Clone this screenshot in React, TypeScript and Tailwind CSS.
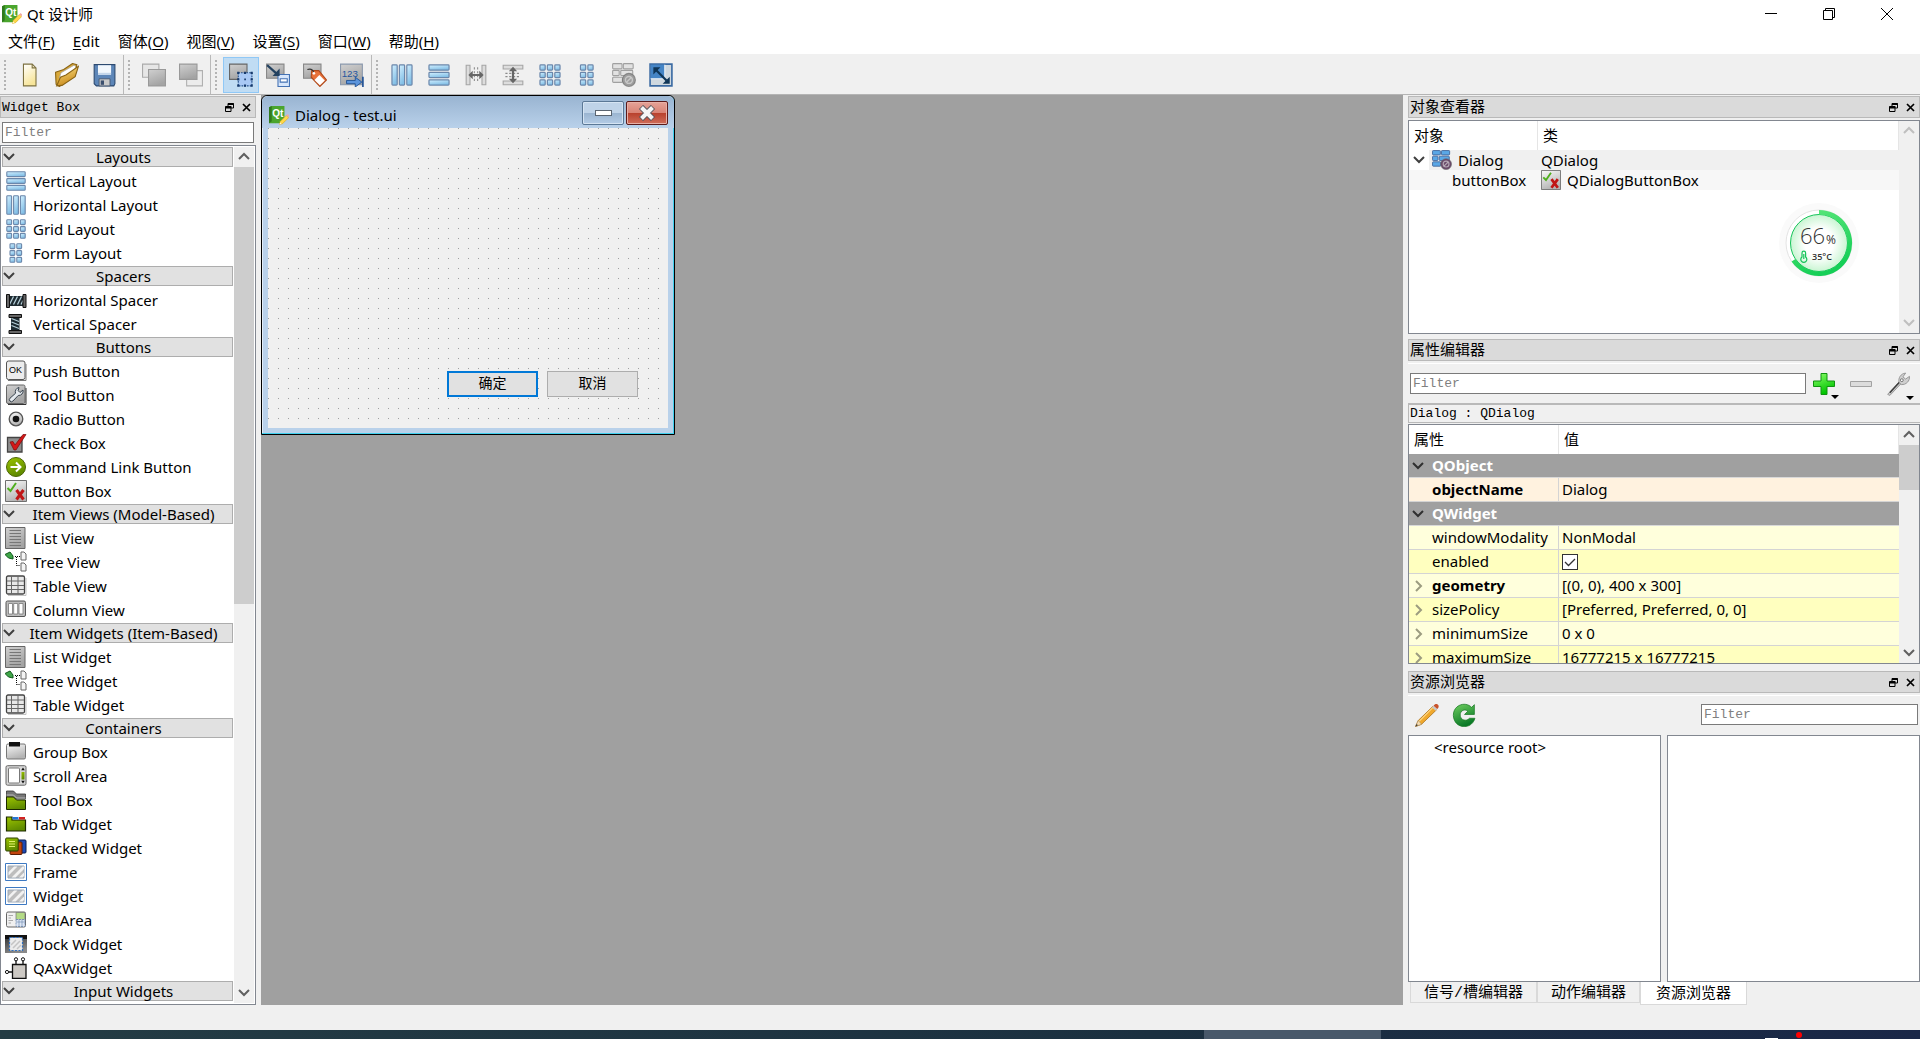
import type { ReactNode } from "react";

type IconProps = { size?: number };

function Svg({ size = 22, children }: { size?: number; children: ReactNode }) {
  return (
    <svg width={size} height={size} viewBox="0 0 22 22" fill="none" aria-hidden="true" className="shrink-0">
      {children}
    </svg>
  );
}

/* Shared gradients, referenced by id from every icon. */
function Gradients() {
  const pairs = [
    ["gBlue", "#d3f0ff", "#83bfe6"],
    ["gGray", "#fafafa", "#b4b4b4"],
    ["gMid", "#d0d0d0", "#a4a4a4"],
    ["gGreen", "#9cc400", "#5f8a00"],
    ["gDark", "#2a2a2a", "#8a8a8a"],
    ["gPaper", "#ffffff", "#f7e59a"],
    ["gFolder", "#ffe88a", "#c98a1c"],
    ["gPlus", "#8dff6a", "#00c400"],
    ["gReload", "#6fcf5f", "#0b7a28"],
    ["gRing", "#5fe87c", "#16cf57"],
  ];
  return (
    <svg width="0" height="0" className="absolute" aria-hidden="true">
      <defs>
        {pairs.map(([id, from, to]) => (
          <linearGradient key={id} id={id} x1="0" y1="0" x2="0.4" y2="1">
            <stop offset="0" stopColor={from} />
            <stop offset="1" stopColor={to} />
          </linearGradient>
        ))}
        <radialGradient id="gBall">
          <stop offset="0.5" stopColor="#ffffff" />
          <stop offset="1" stopColor="#c9f5d2" />
        </radialGradient>
      </defs>
    </svg>
  );
}

const QtLogo = ({ size = 20 }: IconProps) => (
  <Svg size={size}>
    <path d="M0 2.500 3 1h14v17l-2 2H0z" fill="#4aa52e" />
    <path d="M0 2.500 3 1v17l-3 2z" fill="#2f7a1c" />
    <text x="3.500" y="13.500" fontSize="11" fontWeight="bold" fill="#fff" fontFamily="Liberation Sans, sans-serif">
      Qt
    </text>
    <path d="m11.500 21.500 1-3.500 6.500-6.500 2.500 2.500-6.500 6.500z" fill="#ffd84a" stroke="#d9a520" strokeWidth=".6" />
    <path d="m19 11.500 1.500-1.500 1.500 1.500v2z" fill="#f2a7a0" />
    <path d="m11.500 21.500.8-2.400 1.600 1.600z" fill="#fff4d6" />
  </Svg>
);

/* ---- layout icons ---- */
function Cells({ size, rects }: { size?: number; rects: number[][] }) {
  return (
    <Svg size={size}>
      {rects.map(([x, y, w, h], i) => (
        <rect key={i} x={x} y={y} width={w} height={h} rx="0.8" fill="url(#gBlue)" stroke="#6b87ab" strokeWidth="1.100" />
      ))}
    </Svg>
  );
}

const three = [1.8, 8.6, 15.4];
const VLayout = ({ size }: IconProps) => <Cells size={size} rects={three.map((y) => [1.8, y, 18.4, 4.8])} />;
const HLayout = ({ size }: IconProps) => <Cells size={size} rects={three.map((x) => [x, 1.8, 4.8, 18.4])} />;
const GridLayout = ({ size }: IconProps) => (
  <Cells size={size} rects={three.flatMap((y) => three.map((x) => [x, y, 4.8, 4.8]))} />
);
const FormLayout = ({ size }: IconProps) => (
  <Cells size={size} rects={three.flatMap((y) => [5, 11.8].map((x) => [x, y, 4.8, 4.8]))} />
);

const HSplit = ({ size }: IconProps) => (
  <Svg size={size}>
    <path d="M2 2h3.500v18H2zM16.500 2H20v18h-3.500z" fill="#ddd" stroke="#a5a5a5" />
    <path d="M9.500 4v14M12.500 4v14" stroke="#8c8c8c" strokeDasharray="2 1.500" />
    <path d="m4 11 4-3.800V10h6V7.200l4 3.800-4 3.800V12H8v2.800z" fill="#666" />
  </Svg>
);
const VSplit = ({ size }: IconProps) => (
  <Svg size={size}>
    <path d="M2 2h18v3.500H2zM2 16.500h18V20H2z" fill="#ddd" stroke="#a5a5a5" />
    <path d="M4 9.500h14M4 12.500h14" stroke="#8c8c8c" strokeDasharray="2 1.500" />
    <path d="m11 3.500 3.800 4H12v7h2.800l-3.800 4-3.800-4H10v-7H7.200z" fill="#666" />
  </Svg>
);

function Forbidden({ color }: { color: string }) {
  return (
    <>
      <circle cx="15.500" cy="15.500" r="6" fill={color} stroke="#666" strokeOpacity=".6" />
      <circle cx="15.500" cy="15.500" r="3.200" stroke="#e4e4e4" strokeOpacity=".6" strokeWidth="1.300" />
      <path d="m13.500 17.500 4-4" stroke="#e4e4e4" strokeOpacity=".6" strokeWidth="1.300" />
    </>
  );
}
const brokenRects = [
  [0.6, 0.6, 8.6, 4.8],
  [10.4, 0.6, 9, 4.8],
  [0.6, 6.8, 6, 4.8],
  [8, 6.8, 11, 4.8],
  [0.6, 13, 9, 4.8],
];
const BreakLayout = ({ size }: IconProps) => (
  <Svg size={size}>
    {brokenRects.map(([x, y, w, h], i) => (
      <rect key={i} x={x} y={y} width={w} height={h} rx=".8" fill="#e2e2e2" stroke="#a0a0a0" />
    ))}
    <Forbidden color="#9d9d9d" />
  </Svg>
);
const DialogIcon = ({ size }: IconProps) => (
  <Svg size={size}>
    {brokenRects.map(([x, y, w, h], i) => (
      <rect key={i} x={x} y={y} width={w} height={h} rx=".8" fill="#5aa7e6" stroke="#44689c" />
    ))}
    <Forbidden color="#6a4a6a" />
  </Svg>
);
const AdjustSize = ({ size }: IconProps) => (
  <Svg size={size}>
    <path d="M1 1h20v20H1z" fill="#cfd8df" stroke="#3c6ba3" strokeWidth="1.500" />
    <path d="M1.500 1.500h13v13h-13z" fill="#4585c6" />
    <path d="M14.500 1.500v13h-13" stroke="#eef4fa" />
    <path d="m6 6 10 10" stroke="#0f3557" strokeWidth="2" />
    <path d="M4 4h6.500L4 10.500zM19 19h-6.500l6.500-6.500z" fill="#0f3557" />
  </Svg>
);

/* ---- file and mode icons ---- */
const NewFile = ({ size }: IconProps) => (
  <Svg size={size}>
    <path d="M5 1h8L16.500 4.500V21H5z" fill="url(#gPaper)" stroke="#7d7140" />
    <path d="M13 1v3.500h3.500" stroke="#7d7140" />
  </Svg>
);
const OpenFile = ({ size }: IconProps) => (
  <Svg size={size}>
    <path d="M.5 8.500 8 6l8-5.500 4 1L18 12 4 21.500l-3-2z" fill="#d9a93a" stroke="#8a6415" />
    <path d="m4 14 1.500-5 12-7 1.500 1.500-2 6z" fill="#fff" stroke="#aaa" strokeWidth=".7" />
    <path d="M1.500 21 5 13l5-2L21.500 3l-3 9.500L6.500 20.500z" fill="url(#gFolder)" stroke="#8a6415" />
  </Svg>
);
const SaveFile = ({ size }: IconProps) => (
  <Svg size={size}>
    <path d="M2 1.500h19v17.500l-1 2H4l-2-2z" fill="#5d86b8" stroke="#2d4a70" />
    <path d="M5.500 2h12v8h-12z" fill="#f2f7fc" />
    <path d="M5.500 10h12" stroke="#c4d6ea" strokeWidth="2" />
    <path d="M6.500 14.500h10V21h-10z" fill="#c9c9c9" stroke="#44566e" strokeWidth=".8" />
    <path d="M8 16h3v4H8z" fill="#3b4f6e" />
  </Svg>
);
const LowerIcon = ({ size }: IconProps) => (
  <Svg size={size}>
    <path d="M.5 1h15v12h-15z" fill="#e6e6e6" stroke="#aaa" />
    <path d="M6 6h15.500v15H6z" fill="url(#gMid)" stroke="#999" />
  </Svg>
);
const RaiseIcon = ({ size }: IconProps) => (
  <Svg size={size}>
    <path d="M7 7h14.500v14H7z" fill="#ececec" stroke="#b0b0b0" />
    <path d="M.5 1h16v14H.5z" fill="url(#gMid)" stroke="#999" />
  </Svg>
);
const EditWidgets = ({ size }: IconProps) => (
  <Svg size={size}>
    <path d="M.5 1h16v14H.5z" fill="url(#gMid)" stroke="#666" />
    <path d="M8.500 9h12.500v12H8.500z" fill="#a9c9f5" stroke="#24508c" strokeDasharray="1.500 1" />
    <path d="M7.500 8h2v2h-2zM13.700 8h2v2h-2zM19.800 8h2v2h-2zM7.500 14h2v2h-2zM19.800 14h2v2h-2zM7.500 19.800h2v2h-2zM13.700 19.800h2v2h-2zM19.800 19.800h2v2h-2zM14 14.300h1.500v1.500H14z" fill="#173a6b" />
  </Svg>
);
const EditSignals = ({ size }: IconProps) => (
  <Svg size={size}>
    <path d="M.5 1h16v13H.5z" fill="url(#gMid)" stroke="#888" />
    <path d="M11 10.500h10.500v11H11z" fill="#d7e6fb" stroke="#4472b4" />
    <path d="M13 14.500h6.500v3H13z" fill="#fff" stroke="#4472b4" />
    <path d="m1 2 9 8" stroke="#23415f" strokeWidth="2" />
    <path d="M12.500 12H6l6.500-7z" fill="#23415f" />
  </Svg>
);
const EditBuddies = ({ size }: IconProps) => (
  <Svg size={size}>
    <path d="M.5 1h16v13H.5z" fill="url(#gMid)" stroke="#888" />
    <path d="M8 7h6.500l7 8.500-6 6L7.500 13z" fill="#e8723a" stroke="#b0491a" />
    <path d="m15 11 5 5-4.500 4.500-5-5z" fill="#fff" />
    <path d="M4 6c3-1 5 0 6 3" stroke="#333" />
    <circle cx="10" cy="9.500" r="1.200" fill="#fff" />
  </Svg>
);
const EditTabs = ({ size }: IconProps) => (
  <Svg size={size}>
    <path d="M.5 1h20v19H.5z" fill="url(#gMid)" stroke="#8b99ad" />
    <text x="1.500" y="13" fontSize="9" fill="#2657a0" fontFamily="Liberation Sans, sans-serif">
      123
    </text>
    <path d="M6 16h8v-3l6 4.500-6 4.500v-3H6z" fill="#5b94dc" stroke="#1d4f94" strokeWidth=".8" />
    <path d="M21 12.500V22" stroke="#1d4f94" strokeWidth="1.500" />
  </Svg>
);

/* ---- widget box icons ---- */
const HSpacer = () => (
  <Svg>
    <path d="M4 7h14v10H4z" fill="#1d2a30" />
    <path d="m4.500 15.500 4-8M8.500 15.500l4-8M12.500 15.500l4-8M16 15.500l2-4" stroke="#b4ced8" strokeWidth="1.300" />
    <path d="M1.500 5.500h3v13h-3zM18 5.500h3v13h-3z" fill="#666" stroke="#111" />
  </Svg>
);
const VSpacer = () => (
  <Svg>
    <path d="M6 4.500h8.500v13H6z" fill="#1d2a30" />
    <path d="m6.500 5.500 7.500 3M6.500 9l7.500 3M6.500 12.500l7.500 3" stroke="#b4ced8" strokeWidth="1.300" />
    <path d="M4 1.500h12.500v3H4zM4 17.500h12.500v3H4z" fill="#666" stroke="#111" />
  </Svg>
);
const PushBtn = () => (
  <Svg>
    <rect x="1.500" y="1" width="18.500" height="18.500" rx="2" fill="#ececec" stroke="#555" />
    <path d="M3 20.500h18V4" stroke="#777" />
    <text x="4" y="13" fontSize="9" fill="#000" fontFamily="Liberation Sans, sans-serif">
      OK
    </text>
  </Svg>
);
const ToolBtn = () => (
  <Svg>
    <rect x="1.500" y="1" width="18.500" height="18.500" rx="1.500" fill="url(#gMid)" stroke="#666" />
    <path d="M3 20.500h18V4" stroke="#333" />
    <path d="M14 3.500a4.500 4.500 0 0 0-3.500 5.800L5 14.200a2 2 0 0 0 2.900 2.900l5.300-5.600A4.500 4.500 0 0 0 18 6l-3 2.500-1.800-1.800z" fill="#e4e9ee" stroke="#39444f" />
  </Svg>
);
const RadioBtn = () => (
  <Svg>
    <circle cx="11" cy="11" r="6.800" fill="url(#gGray)" stroke="#555" strokeWidth="1.300" />
    <circle cx="11" cy="11" r="3.300" fill="#111" />
  </Svg>
);
const CheckBtn = () => (
  <Svg>
    <path d="M2.500 5.500H17V20H2.500z" fill="#8d8d8d" stroke="#444" strokeWidth="1.300" />
    <path d="m5 10 3-.5 2 3.500L18 2.500h3L11 18H9z" fill="#d31818" stroke="#7a0808" strokeWidth=".7" />
  </Svg>
);
const CommandBtn = () => (
  <Svg>
    <circle cx="11" cy="11" r="9.500" fill="url(#gGreen)" stroke="#4c6606" />
    <path d="M5.500 11h9.500M11 6.500l4.500 4.500-4.500 4.500" stroke="#fff" strokeWidth="2" />
  </Svg>
);
const ButtonBox = ({ size }: IconProps) => (
  <Svg size={size}>
    <path d="M.5.5h21v21H.5z" fill="url(#gGray)" stroke="#6f6f6f" />
    <path d="m2.500 8 3 3L11 3" stroke="#4fae1e" strokeWidth="2" />
    <path d="m11.500 10 7 9.500M18.500 10l-7 9.500" stroke="#c01616" strokeWidth="3" />
  </Svg>
);
const ListIcon = () => (
  <Svg>
    <path d="M.5.5H20v21H.5z" fill="url(#gMid)" stroke="#666" />
    <path d="M4.500 3.500H16M4.500 6.500H16M4.500 9.500H16M4.500 12.500H16M4.500 15.500H16M4.500 18.500H16" stroke="#777" />
  </Svg>
);
const TreeIcon = () => (
  <Svg>
    <path d="m0 3.500 5-2.500 3 4v3L3.500 7z" fill="#3fa648" stroke="#115a1d" />
    <path d="M10 5.500h5M11.500 6v8.500M11.500 14.500H15" stroke="#000" strokeDasharray="1 1" />
    <path d="M16 1h3l2 2v6h-5zM16 12h3l2 2v6h-5z" fill="#f4f4f4" stroke="#666" />
  </Svg>
);
const TableIcon = () => (
  <Svg>
    <rect x="1.500" y="1" width="18" height="18" rx="1.500" fill="#e8e8e8" stroke="#444" strokeWidth="1.300" />
    <path d="M2 6h17M2 10.500h17M2 14.500h17M6.500 1v18M13 1v18" stroke="#666" />
    <path d="M3 20.500h18V3" stroke="#aaa" strokeOpacity=".7" />
  </Svg>
);
const ColumnIcon = () => (
  <Svg>
    <rect x="1" y="2" width="19.500" height="15.500" rx="1.500" fill="#bcbcbc" stroke="#555" />
    <path d="M3.500 4.500h4v10.500h-4zM8.700 4.500h4v10.500h-4zM14 4.500h4v10.500h-4z" fill="#fff" stroke="#777" strokeWidth=".8" />
  </Svg>
);
const GroupIcon = () => (
  <Svg>
    <rect x="1.500" y="3" width="19" height="15" rx="1.500" fill="url(#gGray)" stroke="#777" />
    <path d="M4 1h11v4.500H4z" fill="#111" />
  </Svg>
);
const ScrollIcon = () => (
  <Svg>
    <rect x="1" y=".7" width="20" height="19.500" rx="1.500" fill="#d6d6d6" stroke="#666" />
    <rect x="3.500" y="3" width="11" height="15" rx="1" fill="#fff" stroke="#777" />
    <path d="M16.500 7h3v7.500h-3z" fill="url(#gGreen)" />
    <path d="m18 2.500 1.800 2.800h-3.600zM18 18.500l1.800-2.800h-3.600z" fill="#111" />
  </Svg>
);
const ToolBoxIcon = () => (
  <Svg>
    <path d="M1.500 2h7l3 3h9v5h-19z" fill="#777" stroke="#333" strokeWidth=".8" />
    <path d="M1.500 6h7l3 3h9" stroke="#bbb" />
    <path d="M1.500 8h7l3 3h9v9.500h-19z" fill="url(#gGreen)" stroke="#1c2a00" />
  </Svg>
);
const TabIcon = () => (
  <Svg>
    <path d="M1.500 4h5.500v3h13.500v11h-19z" fill="url(#gGreen)" stroke="#1c2a00" strokeWidth="1.200" />
    <path d="M7.500 4h6v2.500h-6z" fill="#2475d8" />
    <path d="M14 4h6v2.500h-6z" fill="#d12222" />
  </Svg>
);
const StackIcon = () => (
  <Svg>
    <rect x="8" y="3" width="13" height="13" rx="1" fill="#1c49b5" stroke="#0a1c50" />
    <rect x="5" y="5" width="12" height="12.500" rx="1" fill="#c1440e" stroke="#5c1d04" />
    <rect x=".7" y="1" width="12.500" height="13" rx="1" fill="url(#gGreen)" stroke="#2d4000" />
    <path d="M4 4.500h6M4 7h6M4 9.500h6" stroke="#dff06a" />
  </Svg>
);
const FrameIcon = () => (
  <Svg>
    <path d="M.5 2.500h21v17H.5z" fill="#fff" stroke="#3d79c2" />
    <path d="M3 5h16v12H3z" fill="#bdbdbd" stroke="#9aa8b8" />
    <path d="m3.500 11 5.500-5.500h3.500L3.500 14.500zM6.500 16.500l11-11H19v2.500l-8.500 8.500zM14 16.500l5-5v3.500l-1.500 1.500z" fill="#f2f2f2" />
  </Svg>
);
const MdiIcon = () => (
  <Svg>
    <rect x="1.500" y="3" width="19" height="15" rx="1.500" fill="#f0f0f0" stroke="#666" />
    <path d="M11 3.500h9v7h-9z" fill="#b4db86" stroke="#777" strokeWidth=".7" />
    <path d="M3.500 6.500H8M3.500 9H6M3.500 11.500H8M3.500 14H6" stroke="#aaa" />
    <path d="M11 10.500h9v7h-9z" fill="#dce6f5" stroke="#6b86ad" strokeDasharray="2 1" strokeWidth=".8" />
    <path d="M11 13h9M14 11v7M17 11v7" stroke="#6b86ad" strokeWidth=".6" />
  </Svg>
);
const DockIcon = () => (
  <Svg>
    <path d="M0 2h22v18H0z" fill="url(#gDark)" />
    <path d="M0 2h22v4H0z" fill="#111" />
    <path d="M4.500 4.500h13v13h-13z" fill="#ececec" stroke="#2f6fc0" strokeWidth="1.200" strokeDasharray="2 1.500" />
    <path d="m6 12 5-5M8 15l7-7M12 16l4-4" stroke="#c4c4c4" strokeWidth="1.500" />
  </Svg>
);
const AxIcon = () => (
  <Svg>
    <path d="M7.500 7.500H21v14H7.500z" fill="#cdc9c4" stroke="#111" strokeWidth="1.300" />
    <path d="M11 7V3.500M18 7V3.500M4 15h3.500" stroke="#111" strokeWidth="1.300" />
    <circle cx="11" cy="2.300" r="1.600" stroke="#111" />
    <circle cx="18" cy="2.300" r="1.600" stroke="#111" />
    <circle cx="2" cy="15" r="1.600" stroke="#111" />
  </Svg>
);
const ComboIcon = () => (
  <Svg>
    <path d="M1 .5h19v20H1z" fill="#ddd" stroke="#333" strokeWidth="1.500" />
  </Svg>
);

/* ---- dock tool icons ---- */
const PlusIcon = () => (
  <Svg>
    <path d="M8 .5h6v7.500h7.500v5.500H14V21.500H8v-8H.5V8H8z" fill="url(#gPlus)" stroke="#119311" />
  </Svg>
);
const MinusIcon = () => (
  <Svg>
    <path d="M.5 8.500h21v5H.5z" fill="#dcdcdc" stroke="#a2a2a2" />
  </Svg>
);
const WrenchIcon = () => (
  <Svg size={24}>
    <path d="m1.500 20.500 11-12 2 1.500-11 11.500z" fill="#c8c8c8" stroke="#8a8a8a" strokeWidth=".7" />
    <path d="m3.500 19 9-9.800" stroke="#3c3c3c" strokeWidth="1.300" />
    <path d="M12 9.500c-1-4 1.500-8 6-8.500l-2.500 3.500 2.500 2 3.500-2.500c.5 4-3 8-7.500 7.500z" fill="#cfcfcf" stroke="#8e8e8e" strokeWidth=".8" />
    <circle cx="14.500" cy="7.500" r="1.300" fill="#fff" stroke="#555" strokeWidth=".7" />
  </Svg>
);
const PencilIcon = () => (
  <Svg size={24}>
    <path d="M.5 21.500 3 16 16.500 3l3.500 3L6 19.500z" fill="#f0a92e" stroke="#a86a10" strokeWidth=".7" />
    <path d="m3.500 17 13-13" stroke="#ffd98a" />
    <path d="m.5 21.500 2.500-5.500 3 3.500z" fill="#f3dcb4" stroke="#a88a5a" strokeWidth=".5" />
    <path d="m.5 21.500 1-2.200 1.200 1.200z" fill="#333" />
    <path d="m15.500 4 1.500-1.500 3.500 3L19 7z" fill="#c9c9c9" />
    <path d="M17 2.500C18 1 19.500.5 20.800 1.300s1.200 3-.3 4.200z" fill="#c9532b" />
  </Svg>
);
const ReloadIcon = () => (
  <Svg size={24}>
    <path d="M20.500 1.500v9h-9l3-3C12 5.300 7.500 6.500 7.500 11s5.500 6.500 8.500 3h5C18.500 23 8 23.500 3.500 18-.5 12.500 1 5 6.500 2.300 10.500.3 15 1 18 4z" fill="url(#gReload)" stroke="#1b7a26" strokeWidth=".7" />
  </Svg>
);

function Chevron({ dir = "down", color = "#404040" }: { dir?: "down" | "up" | "right"; color?: string }) {
  const d = { down: "m1 3 5 5 5-5", up: "m1 8 5-5 5 5", right: "m4 1 5 5-5 5" }[dir];
  return (
    <svg width="12" height="12" viewBox="0 0 12 12" fill="none" aria-hidden="true" className="shrink-0">
      <path d={d} stroke={color} strokeWidth="2" />
    </svg>
  );
}

const DropArrow = () => (
  <svg width="8" height="4" viewBox="0 0 8 4" aria-hidden="true" className="absolute -right-1 -bottom-1">
    <path d="M0 0h8L4 4z" fill="#000" />
  </svg>
);

const sections = [
  {
    name: "Layouts",
    items: [
      ["Vertical Layout", VLayout],
      ["Horizontal Layout", HLayout],
      ["Grid Layout", GridLayout],
      ["Form Layout", FormLayout],
    ],
  },
  {
    name: "Spacers",
    items: [
      ["Horizontal Spacer", HSpacer],
      ["Vertical Spacer", VSpacer],
    ],
  },
  {
    name: "Buttons",
    items: [
      ["Push Button", PushBtn],
      ["Tool Button", ToolBtn],
      ["Radio Button", RadioBtn],
      ["Check Box", CheckBtn],
      ["Command Link Button", CommandBtn],
      ["Button Box", ButtonBox],
    ],
  },
  {
    name: "Item Views (Model-Based)",
    items: [
      ["List View", ListIcon],
      ["Tree View", TreeIcon],
      ["Table View", TableIcon],
      ["Column View", ColumnIcon],
    ],
  },
  {
    name: "Item Widgets (Item-Based)",
    items: [
      ["List Widget", ListIcon],
      ["Tree Widget", TreeIcon],
      ["Table Widget", TableIcon],
    ],
  },
  {
    name: "Containers",
    items: [
      ["Group Box", GroupIcon],
      ["Scroll Area", ScrollIcon],
      ["Tool Box", ToolBoxIcon],
      ["Tab Widget", TabIcon],
      ["Stacked Widget", StackIcon],
      ["Frame", FrameIcon],
      ["Widget", FrameIcon],
      ["MdiArea", MdiIcon],
      ["Dock Widget", DockIcon],
      ["QAxWidget", AxIcon],
    ],
  },
  { name: "Input Widgets", items: [["", ComboIcon]] },
] as { name: string; items: [string, (p: IconProps) => ReactNode][] }[];

const menus = [
  ["文件(", "F", ")"],
  ["", "E", "dit"],
  ["窗体(", "O", ")"],
  ["视图(", "V", ")"],
  ["设置(", "S", ")"],
  ["窗口(", "W", ")"],
  ["帮助(", "H", ")"],
];

const toolGroups = [
  [
    ["New", NewFile],
    ["Open", OpenFile],
    ["Save", SaveFile],
  ],
  [
    ["Send to Back", LowerIcon],
    ["Bring to Front", RaiseIcon],
  ],
  [
    ["Edit Widgets", EditWidgets],
    ["Edit Signals/Slots", EditSignals],
    ["Edit Buddies", EditBuddies],
    ["Edit Tab Order", EditTabs],
  ],
  [
    ["Lay Out Horizontally", HLayout],
    ["Lay Out Vertically", VLayout],
    ["Horizontal Splitter", HSplit],
    ["Vertical Splitter", VSplit],
    ["Lay Out in a Grid", GridLayout],
    ["Lay Out in a Form", FormLayout],
    ["Break Layout", BreakLayout],
    ["Adjust Size", AdjustSize],
  ],
] as [string, (p: IconProps) => ReactNode][][];

const properties = [
  { name: "QObject", group: true },
  { name: "objectName", value: "Dialog", bold: true, bg: "bg-[#fff2df]" },
  { name: "QWidget", group: true },
  { name: "windowModality", value: "NonModal", bg: "bg-[#ffffdc]" },
  { name: "enabled", check: true, bg: "bg-[#ffffbf]" },
  { name: "geometry", value: "[(0, 0), 400 x 300]", bold: true, open: true, bg: "bg-[#ffffdc]" },
  { name: "sizePolicy", value: "[Preferred, Preferred, 0, 0]", open: true, bg: "bg-[#ffffbf]" },
  { name: "minimumSize", value: "0 x 0", open: true, bg: "bg-[#ffffdc]" },
  { name: "maximumSize", value: "16777215 x 16777215", open: true, bg: "bg-[#ffffbf]" },
];

function DockTitle({ title }: { title: string }) {
  const latin = /^[A-Z]/.test(title);
  return (
    <div className="flex h-[22px] shrink-0 items-center border border-[#b9b9b9] bg-[#dadada] pr-1 pl-px font-['Liberation_Mono','Noto_Sans_CJK_SC',monospace]">
      <h2 className={`flex-1 whitespace-nowrap ${latin ? "pt-[2px] text-[13px]" : "pt-1 text-[15px]"}`}>{title}</h2>
      <button type="button" aria-label="Float" className="mr-2">
        <svg width="9" height="9" viewBox="0 0 9 9" fill="none">
          <path d="M3 3.500V.500h5.500V5H6.500" stroke="#000" />
          <path d="M3 1h5.500M.5 4.500h6" stroke="#000" strokeWidth="2" />
          <path d="M.5 3.500h5.500v5H.5z" stroke="#000" />
        </svg>
      </button>
      <button type="button" aria-label="Close">
        <svg width="9" height="9" viewBox="0 0 9 9" fill="none">
          <path d="m1 1 7 7M8 1 1 8" stroke="#000" strokeWidth="1.700" />
        </svg>
      </button>
    </div>
  );
}

function FilterInput({ label }: { label: string }) {
  return (
    <input
      aria-label={label}
      placeholder="Filter"
      className="block h-[21px] w-full border border-[#7a7a7a] bg-white px-[2px] font-['Liberation_Mono','Noto_Sans_CJK_SC',monospace] text-[13px] leading-[19px] placeholder:text-[#808080]"
    />
  );
}

function ScrollBar({ color, children }: { color?: string; children?: ReactNode }) {
  return (
    <div className="flex w-5 shrink-0 flex-col bg-[#f0f0f0]">
      <button type="button" aria-label="Scroll up" className="flex h-5 shrink-0 items-center justify-center">
        <Chevron dir="up" color={color ?? "#606060"} />
      </button>
      <div className="min-h-0 flex-1">{children}</div>
      <button type="button" aria-label="Scroll down" className="flex h-5 shrink-0 items-center justify-center">
        <Chevron color={color ?? "#606060"} />
      </button>
    </div>
  );
}

function TitleBar() {
  return (
    <header className="flex h-7 shrink-0 items-center pl-[2px]">
      <QtLogo />
      <h1 className="ml-[5px] flex-1">Qt 设计师</h1>
      <button type="button" aria-label="Minimize" className="flex h-7 w-[58px] items-center justify-center">
        <svg width="12" height="12" viewBox="0 0 12 12">
          <path d="M0 5.500h12" stroke="#000" />
        </svg>
      </button>
      <button type="button" aria-label="Restore" className="flex h-7 w-[58px] items-center justify-center">
        <svg width="12" height="12" viewBox="0 0 12 12" fill="none">
          <path d="M.5 2.500h9v9h-9zM2.500 2V.5h9v9H10" stroke="#000" />
        </svg>
      </button>
      <button type="button" aria-label="Close" className="mr-1 flex h-7 w-[58px] items-center justify-center">
        <svg width="12" height="12" viewBox="0 0 12 12">
          <path d="m0 0 12 12M12 0 0 12" stroke="#000" />
        </svg>
      </button>
    </header>
  );
}

function MenuBar() {
  return (
    <nav className="flex h-[26px] shrink-0 items-center gap-[2px]">
      {menus.map(([before, key, after]) => (
        <button key={key} type="button" className="h-full px-2 whitespace-nowrap">
          {before}
          <span className="underline underline-offset-2">{key}</span>
          {after}
        </button>
      ))}
    </nav>
  );
}

function ToolBar() {
  return (
    <div role="toolbar" className="flex h-[41px] shrink-0 items-stretch border-t border-b border-t-[#f0f0f0] border-b-[#b4b4b4] bg-[#f0f0f0]">
      {toolGroups.map((group, g) => (
        <div
          key={g}
          className={`flex items-center gap-px pr-px pl-1 ${g < 3 ? "border-r border-[#b9b9b9]" : ""}`}
        >
          <div className="mr-[5px] h-[30px] w-[2px] bg-[linear-gradient(#b4b4b4_50%,transparent_50%)] bg-[length:2px_4px]" />
          {group.map(([label, Icon]) => (
            <button
              key={label}
              type="button"
              aria-label={label}
              className={`flex h-[36px] w-[36px] items-center justify-center ${
                label === "Edit Widgets" ? "border border-[#90c8f6] bg-[#c0dcf3]" : ""
              }`}
            >
              <Icon size={24} />
            </button>
          ))}
        </div>
      ))}
    </div>
  );
}

function WidgetBox() {
  return (
    <aside className="flex w-64 shrink-0 flex-col">
      <div className="pt-px">
        <DockTitle title="Widget Box" />
      </div>
      <div className="px-[2px] pt-1 pb-[2px]">
        <FilterInput label="Filter widgets" />
      </div>
      <div className="flex min-h-0 flex-1 border border-[#828790] bg-white p-px">
        <div className="flex-1 overflow-hidden">
          {sections.map((section) => (
            <section key={section.name}>
              <button
                type="button"
                className="flex h-5 w-[231px] items-center border border-[#adadad] bg-[#e1e1e1]"
              >
                <Chevron />
                <span className="flex-1 text-center leading-[18px]">{section.name}</span>
              </button>
              <ul className="pt-[2px] pb-px">
                {section.items.map(([name, Icon]) => (
                  <li key={name} className="flex h-6 items-center gap-[6px] pl-[3px] whitespace-nowrap">
                    <Icon size={22} />
                    {name}
                  </li>
                ))}
              </ul>
            </section>
          ))}
        </div>
        <ScrollBar>
          <div className="h-[437px] bg-[#cdcdcd]" />
        </ScrollBar>
      </div>
    </aside>
  );
}

function FormWindow() {
  return (
    <div className="w-[414px] rounded-t-md border border-black bg-[#b9d1ea] shadow-[inset_-1px_-1px_0_#3fd0ee,inset_1px_1px_0_#e4eef8]">
      <div className="flex h-8 items-center rounded-t-md bg-[linear-gradient(#99b4d1,#b9d1ea)] pt-px pr-[6px] pl-[7px]">
        <div className="flex flex-1 items-center gap-[6px] pt-1">
          <QtLogo />
          <h2 className="leading-5">Dialog - test.ui</h2>
        </div>
        <button
          type="button"
          aria-label="Minimize form"
          className="mr-[2px] flex h-6 w-[42px] items-center justify-center rounded-[2px] border border-[#5b7896] bg-[linear-gradient(#bfd3e8_50%,#9ab4d0_50%,#b4cce6)] shadow-[inset_0_0_0_1px_#d5e4f3]"
        >
          <span className="h-[6px] w-[17px] border border-[#5a6470] bg-white" />
        </button>
        <button
          type="button"
          aria-label="Close form"
          className="flex h-6 w-[42px] items-center justify-center rounded-[2px] border border-[#5c1a1a] bg-[linear-gradient(#e5a398,#d98476_48%,#b8402c_50%,#cf6d5a)] shadow-[inset_0_0_0_1px_#e8b0a6]"
        >
          <svg width="18" height="16" viewBox="0 0 18 16" fill="none">
            <path d="m3 2 12 12M15 2 3 14" stroke="#59595f" strokeWidth="6" />
            <path d="m3.500 2.500 11 11M14.500 2.500l-11 11" stroke="#f5f5f5" strokeWidth="4" />
          </svg>
        </button>
      </div>
      <div className="mx-[6px] mb-[6px] flex h-[300px] items-end justify-end gap-[9px] bg-[#f0f0f0] bg-[conic-gradient(from_270deg_at_1px_1px,#a0a0a0_90deg,transparent_0)] bg-[length:10px_10px] pr-[30px] pb-[31px]">
        <button type="button" className="h-[26px] w-[91px] border-2 border-[#0078d7] bg-[#e1e1e1] pb-[2px] text-sm leading-5">
          确定
        </button>
        <button type="button" className="h-[26px] w-[91px] border border-[#adadad] bg-[#e1e1e1] pb-[2px] text-sm leading-5">
          取消
        </button>
      </div>
    </div>
  );
}

function Monitor() {
  return (
    <div className="absolute top-[82px] right-[60px] h-20 w-20">
      <svg width="80" height="80" viewBox="0 0 80 80" fill="none">
        <circle cx="40" cy="40" r="40" fill="#fafafa" />
        <circle cx="40" cy="40" r="33" fill="#fff" stroke="#e4e4e4" />
        <circle cx="40" cy="40" r="28.500" fill="url(#gBall)" stroke="#16c45a" />
        <path d="M40 9.200A30.800 30.800 0 1 1 14.500 57.300" stroke="url(#gRing)" strokeWidth="4.600" />
        <text x="21" y="41" fontSize="22" fill="#333" fontFamily="Open Sans, sans-serif" fontWeight="300">
          66
        </text>
        <text x="47" y="41" fontSize="12" fill="#333" fontFamily="Open Sans, sans-serif">
          %
        </text>
        <text x="33" y="57" fontSize="9" fill="#333" fontFamily="Open Sans, sans-serif" fontWeight="600">
          35°C
        </text>
        <path d="M23 51v-1a1.800 1.800 0 0 1 3.600 0v4a3 3 0 1 1-3.600 0zM24.800 51v5" stroke="#16c45a" strokeWidth="1.200" />
      </svg>
    </div>
  );
}

function ObjectInspector() {
  return (
    <section className="pt-px">
      <DockTitle title="对象查看器" />
      <div className="relative mt-[2px] flex h-[214px] border border-[#828790] bg-white">
        <div className="min-w-0 flex-1">
          <table className="w-full table-fixed border-separate border-spacing-0 text-left">
            <thead>
              <tr className="h-[29px]">
                <th className="w-[129px] border-r border-[#e5e5e5] p-0 pb-[2px] pl-[5px] font-normal">对象</th>
                <th className="border-r border-[#e5e5e5] p-0 pb-[2px] pl-[5px] font-normal">类</th>
              </tr>
            </thead>
            <tbody className="leading-5">
              <tr className="h-5">
                <td className="bg-[linear-gradient(90deg,#fff_20px,#f0f0f0_20px)] p-0">
                  <div className="flex h-5 items-center pl-1">
                    <Chevron />
                    <span className="mr-[6px] ml-[7px]">
                      <DialogIcon size={20} />
                    </span>
                    Dialog
                  </div>
                </td>
                <td className="bg-[#f0f0f0] p-0 pl-[3px]">QDialog</td>
              </tr>
              <tr className="h-5">
                <td className="bg-[#f7f7f7] p-0 pl-[43px]">buttonBox</td>
                <td className="bg-[#f7f7f7] p-0 pl-[3px]">
                  <div className="flex h-5 items-center gap-[6px]">
                    <ButtonBox size={20} />
                    QDialogButtonBox
                  </div>
                </td>
              </tr>
            </tbody>
          </table>
        </div>
        <ScrollBar color="#bfbfbf" />
        <Monitor />
      </div>
    </section>
  );
}

function PropertyEditor() {
  return (
    <section className="pt-[5px]">
      <DockTitle title="属性编辑器" />
      <div className="mt-[2px] flex h-[40px] items-center border-t border-white pr-[10px] pl-[2px]">
        <div className="mr-[7px] flex-1">
          <FilterInput label="Filter properties" />
        </div>
        <button type="button" aria-label="Add property" className="relative mr-[15px]">
          <PlusIcon />
          <DropArrow />
        </button>
        <button type="button" aria-label="Remove property" className="mr-[14px]">
          <MinusIcon />
        </button>
        <button type="button" aria-label="Configure" className="relative">
          <WrenchIcon />
          <DropArrow />
        </button>
      </div>
      <p className="h-5 border-2 border-b border-[#b9b9b9] border-r-0 border-l pl-px font-['Liberation_Mono',monospace] text-[13px] leading-[17px]">
        Dialog : QDialog
      </p>
      <div className="mt-px flex h-[240px] border border-[#828790] bg-white">
        <div className="min-w-0 flex-1 overflow-hidden">
          <table className="w-full table-fixed border-separate border-spacing-0 text-left whitespace-nowrap">
            <thead>
              <tr className="h-[29px]">
                <th className="w-[150px] border-r border-[#e5e5e5] p-0 pb-[2px] pl-[5px] font-normal">属性</th>
                <th className="border-r border-[#e5e5e5] p-0 pb-[2px] pl-[5px] font-normal">值</th>
              </tr>
            </thead>
            <tbody className="leading-[23px]">
              {properties.map((p) =>
                p.group ? (
                  <tr key={p.name} className="h-6 bg-[#a0a0a0] font-bold text-white">
                    <td colSpan={2} className="border-b border-[#d9d9d9] p-0">
                      <div className="flex items-center gap-[8px] pl-[3px]">
                        <Chevron color="#303030" />
                        {p.name}
                      </div>
                    </td>
                  </tr>
                ) : (
                  <tr key={p.name} className={`h-6 ${p.bg}`}>
                    <td className={`border-r border-b border-[#d4d4d4] p-0 ${p.bold ? "font-bold" : ""}`}>
                      <div className="flex items-center gap-[8px] pl-[3px]">
                        {p.open ? <Chevron dir="right" color="#9c9c80" /> : <span className="w-3" />}
                        {p.name}
                      </div>
                    </td>
                    <td className="border-b border-[#d4d4d4] p-0 pl-[3px]">
                      {p.check ? (
                        <span className="relative flex h-4 w-4">
                          <input
                            type="checkbox"
                            defaultChecked
                            aria-label="enabled"
                            className="h-4 w-4 appearance-none border border-[#333] bg-white"
                          />
                          <svg width="16" height="16" viewBox="0 0 16 16" fill="none" className="pointer-events-none absolute inset-0">
                            <path d="m3 8 3.500 3.500L13 5" stroke="#333" strokeWidth="1.300" />
                          </svg>
                        </span>
                      ) : (
                        p.value
                      )}
                    </td>
                  </tr>
                ),
              )}
            </tbody>
          </table>
        </div>
        <ScrollBar>
          <div className="h-[45px] bg-[#cdcdcd]" />
        </ScrollBar>
      </div>
    </section>
  );
}

function ResourceBrowser() {
  const tabs = ["信号/槽编辑器", "动作编辑器", "资源浏览器"];
  return (
    <section className="flex min-h-0 flex-1 flex-col pt-[7px]">
      <DockTitle title="资源浏览器" />
      <div className="mt-[2px] flex h-[40px] shrink-0 items-center border-t border-white pr-[2px] pb-[2px] pl-[7px]">
        <button type="button" aria-label="Edit resources" className="mr-[13px]">
          <PencilIcon />
        </button>
        <button type="button" aria-label="Reload">
          <ReloadIcon />
        </button>
        <div className="ml-auto w-[217px]">
          <FilterInput label="Filter resources" />
        </div>
      </div>
      <div className="flex min-h-0 flex-1 gap-[6px]">
        <ul className="min-w-0 flex-1 border border-[#828790] bg-white">
          <li className="pl-[25px] leading-[22px]">&lt;resource root&gt;</li>
        </ul>
        <div className="min-w-0 flex-1 border border-[#828790] bg-white" />
      </div>
      <div role="tablist" className="flex h-[23px] shrink-0 items-start pl-[2px] font-['Liberation_Mono','Noto_Sans_CJK_SC',monospace]">
        {tabs.map((tab, i) => (
          <button
            key={tab}
            type="button"
            role="tab"
            aria-selected={i === 2}
            className={`border border-t-0 border-[#d9d9d9] pt-[3px] leading-[17px] whitespace-nowrap ${
              i === 2 ? "h-[23px] bg-white px-[15px]" : "h-[21px] px-[13px]"
            }`}
          >
            {tab}
          </button>
        ))}
      </div>
    </section>
  );
}

export default function App() {
  return (
    <div className="flex h-screen flex-col overflow-hidden bg-white font-['Noto_Sans','Noto_Sans_CJK_SC',sans-serif] text-[15px] leading-5 text-black">
      <Gradients />
      <TitleBar />
      <MenuBar />
      <ToolBar />
      <div className="flex min-h-0 flex-1 bg-[#f0f0f0]">
        <WidgetBox />
        <main className="ml-[5px] min-w-0 flex-1 overflow-hidden bg-[#a0a0a0]">
          <FormWindow />
        </main>
        <aside className="ml-[5px] flex w-[512px] shrink-0 flex-col">
          <ObjectInspector />
          <PropertyEditor />
          <ResourceBrowser />
        </aside>
      </div>
      <footer className="shrink-0">
        <div className="h-[25px] bg-[#f0f0f0]" />
        <div className="flex h-[9px] bg-[linear-gradient(90deg,#243c44,#1b3040_60%,#1a2747)]">
          <div className="ml-[62.7%] w-[177px] bg-[#48586a]" />
          <div className="ml-auto flex w-[155px] items-end gap-[18px]">
            <span className="h-px w-[13px] bg-white" />
            <span className="mb-[1px] h-[6px] w-[6px] rounded-full bg-[#ff0000]" />
          </div>
        </div>
      </footer>
    </div>
  );
}
